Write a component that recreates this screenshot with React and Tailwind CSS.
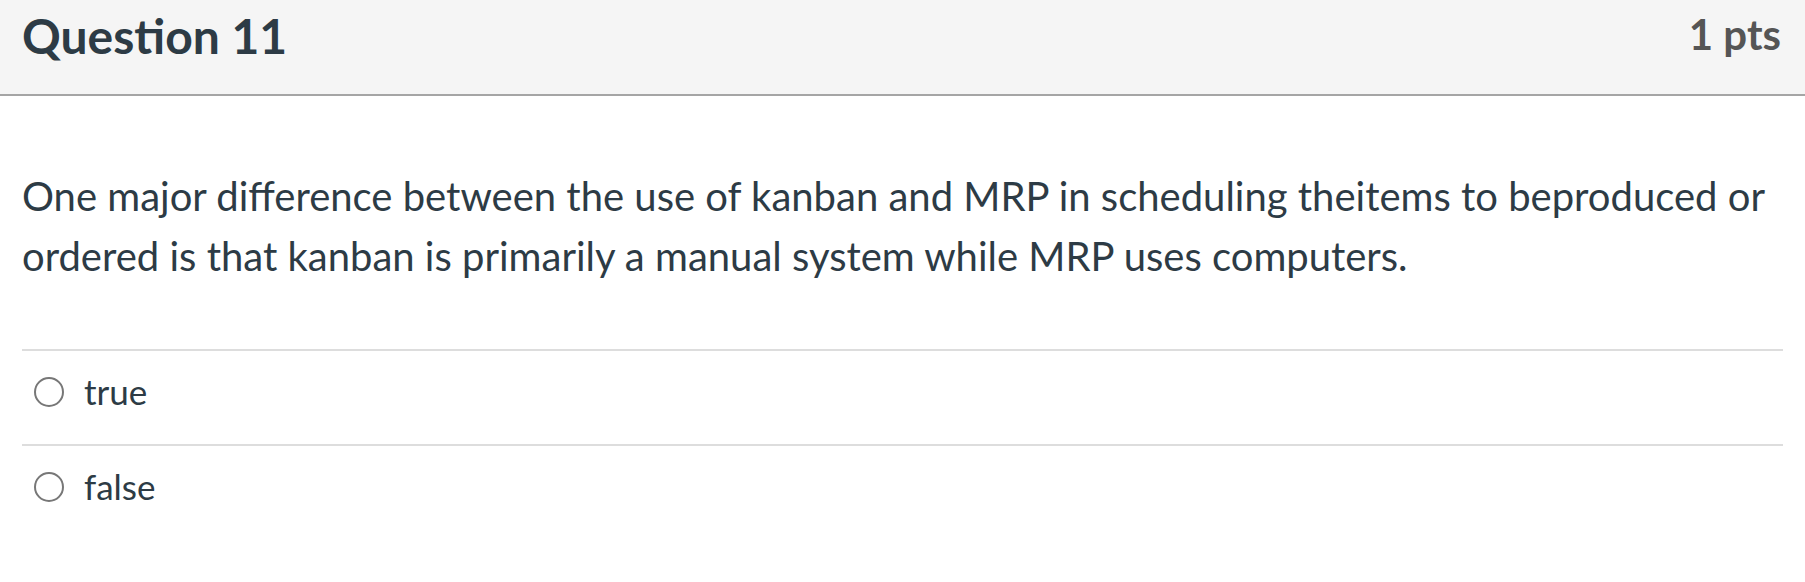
export default function App() {
  const options = ["true", "false"];
  return (
    <div className="w-[1805px] h-[582px] bg-white text-[#2d3b45]" style={{ fontFamily: "Lato, 'Open Sans', sans-serif" }}>
      <div className="h-[96px] bg-[#f5f5f5] border-b-2 border-[#a5a5a5] px-[22px] pt-[0px] flex items-start justify-between">
        <div className="text-[48px] font-bold leading-normal">Question 11</div>
        <div className="text-[42px] font-bold leading-normal text-[#555555] pr-[2px] pt-[3px]">1 pts</div>
      </div>
      <div className="px-[22px]">
        <p className="mt-[70px] text-[40px] leading-[60px]">
          One major difference between the use of kanban and MRP in scheduling theitems to beproduced or ordered is that kanban is primarily a manual system while MRP uses computers.
        </p>
        <div className="mt-[63px]">
          {options.map((o) => (
            <div key={o} className="h-[95px] border-t-2 border-[#dddddd] flex items-start pt-[14px]">
              <span className="mt-[12px] ml-[12px] w-[30px] h-[30px] rounded-full border-[2.5px] border-[#777777] bg-white shrink-0" />
              <span className="ml-[20px] text-[35px] leading-normal">{o}</span>
            </div>
          ))}
        </div>
      </div>
    </div>
  );
}
